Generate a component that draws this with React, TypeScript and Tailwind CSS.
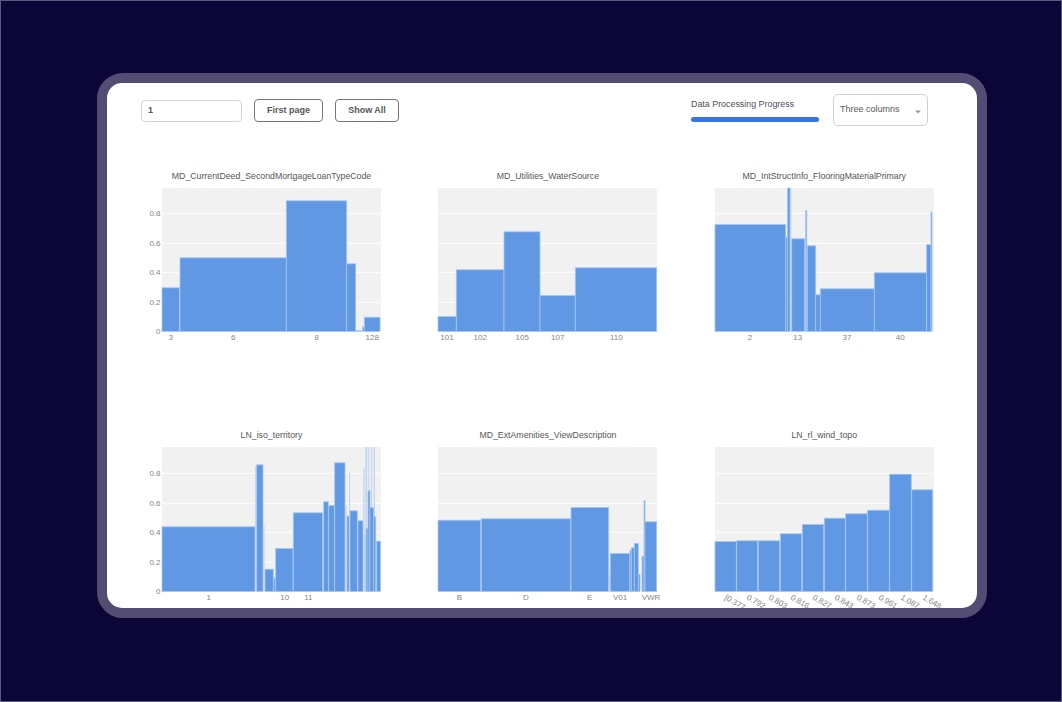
import React from "react";

type Bar = [number, number, number, number?];
type ChartData = {
  title: string;
  bars: Bar[];
  ticks: [number, string][];
  yAxis?: boolean;
  rotated?: boolean;
  dy?: number;
};

const H = 143.5;
const W = 218.8;
const FULL = H;

const charts: ChartData[] = [
  {
    title: "MD_CurrentDeed_SecondMortgageLoanTypeCode",
    yAxis: true,
    bars: [
      [0, 17.5, 43.7],
      [18, 124.3, 73.7],
      [124.3, 184.7, 130.7],
      [184.7, 193.7, 67.7],
      [193.7, 199.7, 0.7],
      [200.7, 202.3, 4.7],
      [202.3, 218, 14.3],
    ],
    ticks: [[8.7, "3"], [71.3, "6"], [154.7, "8"], [210.3, "128"]],
  },
  {
    title: "MD_Utilities_WaterSource",
    bars: [
      [0, 18.3, 15],
      [18.3, 66, 61.7],
      [66, 102, 99.7],
      [102, 137.3, 36],
      [137.3, 218.7, 63.7],
    ],
    ticks: [[9, "101"], [42.3, "102"], [84.3, "105"], [119.7, "107"], [178.3, "110"]],
  },
  {
    title: "MD_IntStructInfo_FlooringMaterialPrimary",
    bars: [
      [0, 70.7, 107],
      [70.7, 72.3, 94],
      [72.6, 75, FULL],
      [75, 76.5, FULL, 1],
      [76.7, 89.7, 92.7],
      [89.9, 90.7, 80, 1],
      [90.7, 91.8, 121],
      [92.3, 100.7, 85.7],
      [100.7, 105.3, 36.7],
      [105.3, 159.3, 42.7],
      [159.3, 211.7, 58.7],
      [211.7, 216, 86.7],
      [216, 217, 119.3],
    ],
    ticks: [[35, "2"], [82.7, "13"], [132, "37"], [185.3, "40"]],
  },
  {
    title: "LN_iso_territory",
    yAxis: true,
    dy: 1,
    bars: [
      [0, 93, 64.7],
      [93, 94.7, 125.3, 1],
      [94.7, 101, 126.7],
      [101, 102.5, 66, 1],
      [103, 111.3, 22.3],
      [111.7, 113.3, 13.7],
      [113.7, 131, 43],
      [131.3, 160.7, 78.7],
      [161.7, 166.3, 89.7],
      [166.7, 172.3, 86],
      [172.7, 183, 128.7],
      [183.2, 184.8, 86, 1],
      [185, 187, 75.3],
      [187, 188, 119, 1],
      [188, 195.3, 80.7],
      [196, 201, 70.7],
      [201.2, 202.6, 124, 1],
      [203.3, 205.3, FULL, 1],
      [206.3, 207.5, FULL, 1],
      [209, 210.2, FULL, 1],
      [211.7, 213, FULL, 1],
      [202, 204, 57, 1],
      [204, 206, 63],
      [206, 208, 100.7],
      [208, 211.7, 84],
      [211.7, 213.7, 74.7],
      [214.7, 218.5, 50.3],
    ],
    ticks: [[46.7, "1"], [122.7, "10"], [146.3, "11"]],
  },
  {
    title: "MD_ExtAmenities_ViewDescription",
    dy: 1,
    bars: [
      [0, 42.7, 71.3],
      [43.3, 132.7, 72.7],
      [133, 170.7, 84],
      [170.7, 172.3, 18, 1],
      [172.3, 191.7, 38],
      [192, 193.3, 41],
      [193.3, 196.3, 43.7],
      [196.3, 200.3, 48],
      [200.3, 202, 17.3],
      [204, 206, 35],
      [206, 207, 91],
      [207, 218.7, 69.7],
    ],
    ticks: [[21.3, "B"], [88, "D"], [151.7, "E"], [182, "V01"], [213, "VWR"]],
  },
  {
    title: "LN_rl_wind_topo",
    rotated: true,
    dy: 1,
    bars: [
      [0, 21.3, 50],
      [21.7, 42.7, 50.7],
      [43.3, 64.7, 50.7],
      [65.3, 86.7, 57.7],
      [87.3, 108.7, 67],
      [109.3, 130.3, 73.3],
      [130.7, 152.3, 77.7],
      [152.7, 174.3, 81.3],
      [174.7, 196.3, 117.3],
      [196.7, 217.7, 101.7],
    ],
    ticks: [
      [9, "[0.377, 0.792"],
      [31, "0.792"],
      [53, "0.803"],
      [75, "0.816"],
      [97, "0.827"],
      [119, "0.843"],
      [141, "0.873"],
      [163, "0.961"],
      [185, "1.087"],
      [207, "1.648"],
    ],
  },
];

const gridY: [number, string][] = [
  [25.3, "0.8"],
  [55.3, "0.6"],
  [84.3, "0.4"],
  [114.3, "0.2"],
];

function Chart({ data }: { data: ChartData }) {
  const dy = data.dy ?? 0;
  return (
    <div>
      <div className="h-[28px] w-[219px] ml-[27px] flex justify-center pt-[11px] text-[8.75px] leading-[11px] whitespace-nowrap text-[#555555]">
        {data.title}
      </div>
      <svg width="276" height="220" viewBox="-27 0 276 220" className="block overflow-visible">
        <rect x="0" y="0" width={W} height={H + dy} fill="#f1f1f1" />
        <g transform={`translate(0 ${dy})`}>
          {gridY.map(([y]) => (
            <line key={y} x1="0" x2={W} y1={y} y2={y} stroke="#ffffff" strokeWidth="1" />
          ))}
          <line x1="0" x2={W} y1={H} y2={H} stroke="#ffffff" strokeWidth="1" />
          {data.bars.map(([a, b, h, light], i) => {
            const bh = h >= FULL ? h + dy : h;
            return (
              <rect
                key={i}
                x={a}
                y={H - bh}
                width={b - a}
                height={bh}
                fill={light ? "#c3d7f4" : "#5f97e3"}
                stroke={light ? "none" : "#a6c6f1"}
                strokeWidth="0.8"
              />
            );
          })}
          {data.yAxis && (
            <g className="fill-[#858585] text-[8px]">
              {gridY.map(([y, t]) => (
                <text key={t} x="-1.5" y={y + 3} textAnchor="end">
                  {t}
                </text>
              ))}
              <text x="-1.5" y={H + 2} textAnchor="end">
                0
              </text>
            </g>
          )}
          <g className="fill-[#858585] text-[8px]">
            {data.ticks.map(([x, t]) =>
              data.rotated ? (
                <text key={t} x={x} y={H + 7.5} transform={`rotate(30 ${x} ${H + 7.5})`}>
                  {t}
                </text>
              ) : (
                <text key={t} x={x} y={H + 8.5} textAnchor="middle">
                  {t}
                </text>
              ),
            )}
          </g>
        </g>
      </svg>
    </div>
  );
}

export default function App() {
  return (
    <div className="w-[1062px] h-[702px] bg-[#0b0637] border border-[#5d5a7e] pt-[72px] pl-[96px] overflow-hidden font-['Liberation_Sans',Arial,sans-serif]">
      <div className="w-[890px] h-[545px] border-[10px] border-[#544d73] rounded-[26px] bg-[#544d73]">
        <div className="w-[870px] h-[525px] bg-white rounded-[15px] overflow-hidden pt-[11px] pl-[28px]">
          <div className="h-[32px] flex items-center w-[787px] ml-[6px] opacity-[0.99]">
            <div className="w-[101px] h-[22px] mt-[1px] border border-[#d4d4d4] rounded-[4px] flex items-center pl-[6px] text-[9px] font-bold text-[#555555]">
              1
            </div>
            <button className="ml-[12px] mt-[1px] w-[69px] h-[23px] border border-[#757575] rounded-[4px] text-[9px] font-bold text-[#555555]">
              First page
            </button>
            <button className="ml-[12px] mt-[1px] w-[64px] h-[23px] border border-[#757575] rounded-[4px] text-[9px] font-bold text-[#555555]">
              Show All
            </button>
            <div className="ml-auto w-[128px] mt-[1px]">
              <div className="text-[8.9px] leading-[11px] text-[#4b5060] whitespace-nowrap">
                Data Processing Progress
              </div>
              <div className="mt-[7px] h-[5px] rounded-full bg-[#3473ea]" />
            </div>
            <div className="ml-[14px] w-[95px] h-[32px] border border-[#cfcfcf] rounded-[5px] flex items-center justify-between pl-[6px] pr-[6px] text-[9px] text-[#555555]">
              <span>Three columns</span>
              <svg width="6" height="4" viewBox="0 0 6 4" className="mt-[3px]">
                <path d="M0 0.5h6L3 3.5z" fill="#999999" />
              </svg>
            </div>
          </div>
          <div className="mt-[34px] grid grid-cols-[276.4px_276.4px_276.4px] auto-rows-[259px] opacity-[0.99]">
            {charts.map((c) => (
              <Chart key={c.title} data={c} />
            ))}
          </div>
        </div>
      </div>
    </div>
  );
}
